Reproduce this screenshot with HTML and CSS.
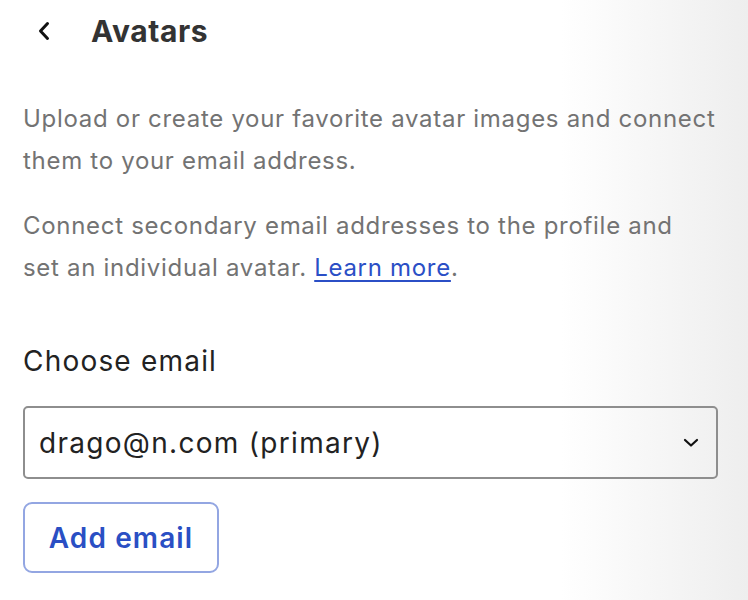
FILE: index.html
```html
<!DOCTYPE html>
<html lang="en">
<head>
<meta charset="utf-8">
<title>Avatars</title>
<link rel="stylesheet" href="styles.css">
</head>
<body>
<div class="page">
  <header class="header">
    <button class="back" aria-label="Back">
      <svg width="14" height="20" viewBox="0 0 14 20"><path d="M10.5 2.5 L3.5 10 L10.5 17.5" fill="none" stroke="#111" stroke-width="3" stroke-linecap="round" stroke-linejoin="round"/></svg>
    </button>
    <h1 class="title">Avatars</h1>
  </header>
  <p class="desc">Upload or create your favorite avatar images and connect them to your email address.</p>
  <p class="desc">Connect secondary email addresses to the profile and <span class="nowrap">set an</span> individual avatar. <a href="#" class="link">Learn more</a>.</p>
  <label class="label">Choose email</label>
  <div class="select">
    <span class="select-value">drago@n.com (primary)</span>
    <svg class="caret" width="16" height="10" viewBox="0 0 16 10"><path d="M2 2 L8 7.5 L14 2" fill="none" stroke="#111" stroke-width="2.2" stroke-linecap="round" stroke-linejoin="round"/></svg>
  </div>
  <button class="add-btn">Add email</button>
</div>
</body>
</html>
```
FILE: styles.css
```css
html, body {
  margin: 0;
  padding: 0;
}
body {
  width: 748px;
  height: 600px;
  overflow: hidden;
  background: linear-gradient(to right, #ffffff 0%, #ffffff 75%, #f4f4f4 91%, #eeeeee 100%);
  font-family: Inter, "Noto Sans", sans-serif;
}
.page {
  padding: 0 28px 0 23px;
  display: flex;
  flex-direction: column;
  align-items: flex-start;
}
.header {
  display: flex;
  align-items: center;
  height: 62px;
}
.back {
  width: 68px;
  height: 40px;
  padding: 0 0 0 14px;
  margin: 0;
  border: 0;
  background: none;
  display: flex;
  align-items: center;
}
.title {
  margin: 0;
  font-size: 30px;
  font-weight: 700;
  color: #333333;
  letter-spacing: 0.6px;
}
.desc {
  margin: 36px 0 0;
  font-size: 24px;
  line-height: 42px;
  color: #737373;
  letter-spacing: 0.7px;
}
.desc + .desc {
  margin-top: 23px;
}
.nowrap {
  white-space: nowrap;
}
.link {
  color: #2b4fc6;
  text-decoration: underline;
  text-underline-offset: 4px;
}
.label {
  margin-top: 52px;
  font-size: 28px;
  line-height: 40px;
  color: #222222;
  letter-spacing: 1.2px;
}
.select {
  box-sizing: border-box;
  margin-top: 25px;
  width: 695px;
  height: 73px;
  border: 2px solid #8e8e8e;
  border-radius: 5px;
  display: flex;
  align-items: center;
  justify-content: space-between;
  padding: 0 17px 0 14px;
}
.select-value {
  font-size: 28px;
  color: #222222;
  letter-spacing: 1.3px;
}
.add-btn {
  box-sizing: border-box;
  margin-top: 23px;
  width: 196px;
  height: 71px;
  border: 2px solid #93a6e2;
  border-radius: 9px;
  background: #ffffff;
  font-family: Inter, "Noto Sans", sans-serif;
  font-size: 28px;
  font-weight: 600;
  color: #2a4fc4;
  letter-spacing: 1.1px;
  padding: 0;
}
```
